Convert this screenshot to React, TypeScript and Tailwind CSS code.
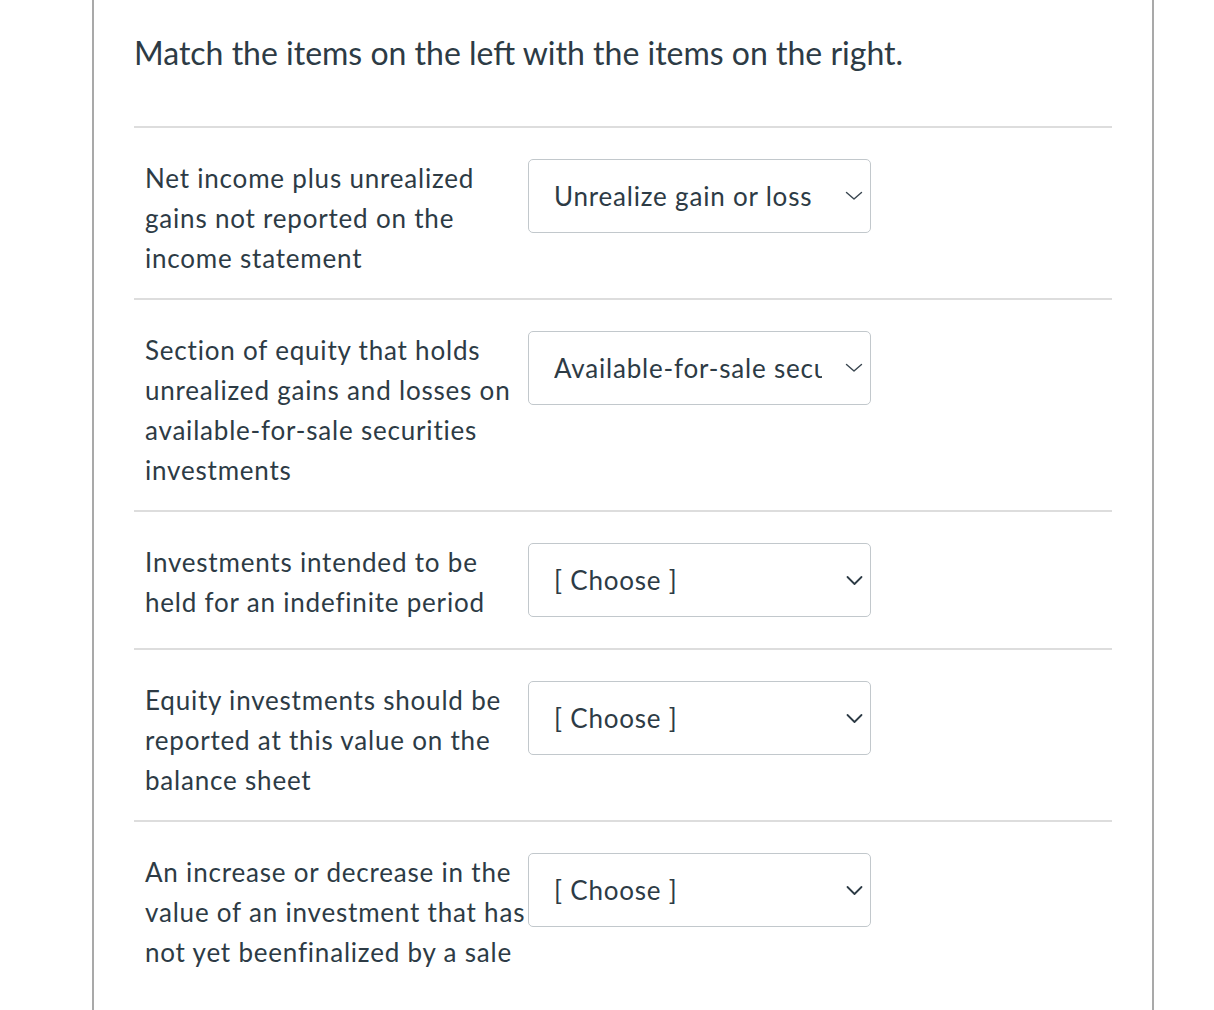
import React from 'react'

type Row = {
  prompt: string
  answer: string
  bold?: boolean
}

const ROWS: Row[] = [
  { prompt: 'Net income plus unrealized gains not reported on the income statement', answer: 'Unrealize gain or loss' },
  {
    prompt: 'Section of equity that holds unrealized gains and losses on available-for-sale securities investments',
    answer: 'Available-for-sale securities',
  },
  { prompt: 'Investments intended to be held for an indefinite period', answer: '[ Choose ]', bold: true },
  { prompt: 'Equity investments should be reported at this value on the balance sheet', answer: '[ Choose ]', bold: true },
  { prompt: 'An increase or decrease in the value of an investment that has not yet beenfinalized by a sale', answer: '[ Choose ]', bold: true },
]

function Chevron({ bold }: { bold?: boolean }) {
  return bold ? (
    <svg width="17" height="11" viewBox="0 0 17 11" className="shrink-0">
      <polyline points="1.5,2 8.5,9 15.5,2" fill="none" stroke="#2d3b45" strokeWidth="1.8" strokeLinecap="round" strokeLinejoin="round" />
    </svg>
  ) : (
    <svg width="18" height="10" viewBox="0 0 18 10" className="shrink-0">
      <polyline points="1.5,1.5 9,8 16.5,1.5" fill="none" stroke="#3a4650" strokeWidth="1.4" strokeLinecap="round" strokeLinejoin="round" />
    </svg>
  )
}

function FakeSelect({ value, bold }: { value: string; bold?: boolean }) {
  return (
    <div className="flex h-[74px] w-[343px] items-center rounded-[5px] border-[1.5px] border-[#c2c8cc] bg-white pl-[25px] pr-[7px]">
      <span className="flex-1 overflow-hidden whitespace-nowrap text-[26px] leading-[40px] tracking-[0.8px] text-[#2d3b45]">
        <span className="block w-[268px] overflow-hidden">{value}</span>
      </span>
      <Chevron bold={bold} />
    </div>
  )
}

export default function App() {
  return (
    <div className="min-h-[1010px] bg-white" style={{ fontFamily: 'Lato, "Noto Sans", sans-serif' }}>
      <div className="ml-[92px] min-h-[1010px] w-[1062px] border-x-2 border-[#a9a9a9] pl-[40px] pr-[40px]">
        <h1 className="pt-[34px] text-[32px] leading-[38px] font-normal text-[#2d3b45]">
          Match the items on the left with the items on the right.
        </h1>

        <div className="mt-[54px]">
          {ROWS.map((r, i) => (
            <div key={i} className="flex items-start border-t-2 border-[#dddddd]">
              <p className="w-[394px] shrink-0 pt-[30px] pb-[20px] pl-[11px] text-[26px] leading-[40px] tracking-[0.8px] text-[#2d3b45]">
                {r.prompt}
              </p>
              <div className="py-[31px]">
                <FakeSelect value={r.answer} bold={r.bold} />
              </div>
            </div>
          ))}
        </div>
      </div>
    </div>
  )
}
